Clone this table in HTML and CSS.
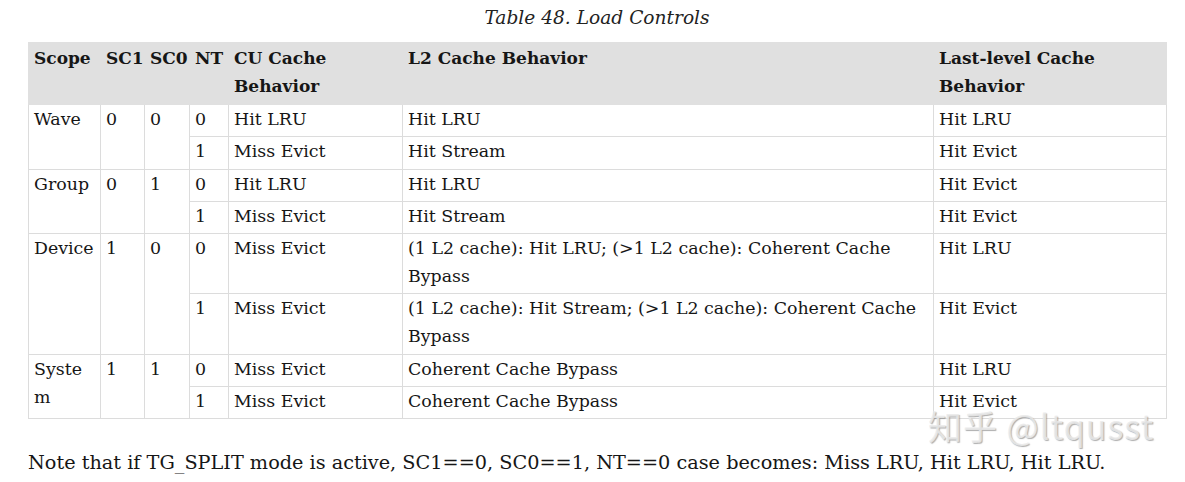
FILE: index.html
```html
<!DOCTYPE html>
<html>
<head>
<meta charset="utf-8">
<link rel="stylesheet" href="styles.css">
</head>
<body>
<div class="page">
  <div class="caption">Table 48. Load Controls</div>
  <table class="grid">
    <colgroup>
      <col class="c-scope"><col class="c-sc1"><col class="c-sc0"><col class="c-nt"><col class="c-cu"><col class="c-l2"><col class="c-llc">
    </colgroup>
    <thead>
      <tr><th>Scope</th><th>SC1</th><th>SC0</th><th>NT</th><th>CU Cache Behavior</th><th>L2 Cache Behavior</th><th>Last-level Cache Behavior</th></tr>
    </thead>
    <tbody>
      <tr><td rowspan="2">Wave</td><td rowspan="2">0</td><td rowspan="2">0</td><td>0</td><td>Hit LRU</td><td>Hit LRU</td><td>Hit LRU</td></tr>
      <tr><td>1</td><td>Miss Evict</td><td>Hit Stream</td><td>Hit Evict</td></tr>
      <tr><td rowspan="2">Group</td><td rowspan="2">0</td><td rowspan="2">1</td><td>0</td><td>Hit LRU</td><td>Hit LRU</td><td>Hit Evict</td></tr>
      <tr><td>1</td><td>Miss Evict</td><td>Hit Stream</td><td>Hit Evict</td></tr>
      <tr><td rowspan="2">Device</td><td rowspan="2">1</td><td rowspan="2">0</td><td>0</td><td>Miss Evict</td><td>(1 L2 cache): Hit LRU; (&gt;1 L2 cache): Coherent Cache Bypass</td><td>Hit LRU</td></tr>
      <tr><td>1</td><td>Miss Evict</td><td>(1 L2 cache): Hit Stream; (&gt;1 L2 cache): Coherent Cache Bypass</td><td>Hit Evict</td></tr>
      <tr><td rowspan="2" class="wrap">System</td><td rowspan="2">1</td><td rowspan="2">1</td><td>0</td><td>Miss Evict</td><td>Coherent Cache Bypass</td><td>Hit LRU</td></tr>
      <tr><td>1</td><td>Miss Evict</td><td>Coherent Cache Bypass</td><td>Hit Evict</td></tr>
    </tbody>
  </table>
  <p class="note">Note that if TG_SPLIT mode is active, SC1==0, SC0==1, NT==0 case becomes: Miss LRU, Hit LRU, Hit LRU.</p>
  <div class="watermark">知乎 @ltqusst</div>
</div>
</body>
</html>
```
FILE: styles.css
```css
html, body {
  margin: 0;
  padding: 0;
  background: #ffffff;
}
body {
  font-family: "DejaVu Serif", "Liberation Serif", serif;
  color: #161616;
}
.page {
  position: relative;
  width: 1185px;
  height: 482px;
  padding: 0 19px 0 28px;
  box-sizing: border-box;
}
.caption {
  font-style: italic;
  font-size: 18.6px;
  line-height: 24px;
  text-align: center;
  padding-top: 6px;
  height: 42px;
  box-sizing: border-box;
  color: #222;
}
.grid {
  width: 1138px;
  table-layout: fixed;
  border-collapse: collapse;
  font-size: 17.4px;
  line-height: 28px;
}
.c-scope { width: 72px; }
.c-sc1 { width: 44px; }
.c-sc0 { width: 45px; }
.c-nt { width: 39px; }
.c-cu { width: 174px; }
.c-l2 { width: 531px; }
.c-llc { width: 233px; }
.grid th, .grid td {
  border: 1px solid #dcdcdc;
  padding: 0 5px 3.25px 5px;
  text-align: left;
  vertical-align: top;
}
.grid th {
  background: #e0e0e0;
  font-weight: bold;
  font-size: 17px;
  padding-top: 1px;
  padding-bottom: 4px;
  border-color: #e0e0e0;
}
.grid td.wrap {
  overflow-wrap: anywhere;
  word-break: break-all;
}
.note {
  margin: 0;
  padding-top: 29px;
  font-size: 19.25px;
  line-height: 30px;
}
.watermark {
  position: absolute;
  left: 928px;
  top: 404px;
  font-family: "Noto Sans CJK SC", "Noto Sans", sans-serif;
  font-size: 34px;
  line-height: 44px;
  color: rgba(235, 235, 235, 0.85);
  text-shadow: 1px 1px 1px rgba(120, 120, 120, 0.6);
  letter-spacing: 1px;
}
```
